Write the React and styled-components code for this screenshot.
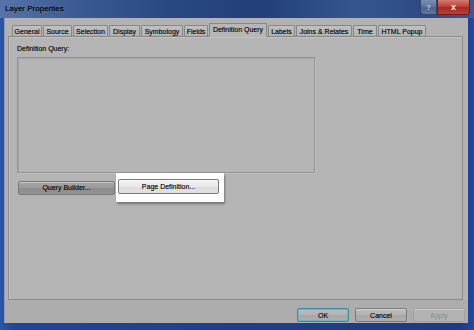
import React from "react";
import styled, { createGlobalStyle } from "styled-components";

const Global = createGlobalStyle`
  html, body { margin: 0; padding: 0; width: 474px; height: 330px; overflow: hidden; background: #1d3778; }
  * { box-sizing: border-box; }
`;

const Window = styled.div`
  width: 474px;
  height: 330px;
  display: flex;
  flex-direction: column;
  background: linear-gradient(to right, #2d55a6 0%, #20469a 3%, #1f3f8c 50%, #1c3a85 97%, #234a9e 100%);
  font-family: "Liberation Sans", Arial, sans-serif;
`;

const TitleBar = styled.div`
  height: 18px;
  flex: none;
  display: flex;
  align-items: flex-start;
  justify-content: space-between;
  padding-left: 5px;
  padding-right: 4px;
  background: linear-gradient(to right, #5674a8 0%, #3d5c96 15%, #2a4884 35%, #223f7c 55%, #36558f 75%, #2d4a86 90%, #3a5894 100%);
`;

const Title = styled.span`
  font-size: 8px;
  line-height: 18px;
  color: #05080f;
  text-shadow: 0 0 0.6px rgba(0, 0, 0, 0.7), 0 0 3px rgba(150, 170, 205, 0.5);
`;

const Caption = styled.div`
  display: flex;
  height: 15px;
`;

const CapButton = styled.div`
  width: ${(p) => p.$w}px;
  height: 15px;
  display: flex;
  align-items: center;
  justify-content: center;
  font-size: ${(p) => (p.$close ? 9 : 8)}px;
  font-weight: bold;
  color: ${(p) => (p.$close ? "#f3e4e4" : "#b9c4d6")};
  border: 1px solid ${(p) => (p.$close ? "#6e1c1c" : "#34466c")};
  border-top: none;
  border-radius: ${(p) => (p.$close ? "0 0 4px 0" : "0 0 0 4px")};
  background: ${(p) =>
    p.$close
      ? "linear-gradient(#d47a72 0%, #c0433a 45%, #a82a24 55%, #b8403a 100%)"
      : "linear-gradient(#7a8fb2 0%, #5f779f 45%, #4a628c 55%, #5f78a2 100%)"};
`;

const Client = styled.div`
  flex: 1;
  margin: 0 6px 7px 4px;
  background: #b2b2b2;
  border-left: 1px solid #8d9cb6;
  display: flex;
  flex-direction: column;
  padding: 5px 3px 0 3px;
`;

const TabStrip = styled.div`
  display: flex;
  align-items: flex-end;
  gap: 1px;
  height: 14px;
  padding-left: 4px;
  margin-right: 2px;
  position: relative;
  z-index: 1;
  margin-bottom: -1px;
`;

const text = `
  color: #141414;
  text-shadow: 0 0 0.5px rgba(0, 0, 0, 0.6);
`;

const Tab = styled.div`
  width: ${(p) => p.$w}px;
  height: ${(p) => (p.$active ? 14 : 12)}px;
  display: flex;
  align-items: center;
  justify-content: center;
  font-size: 7px;
  white-space: nowrap;
  ${text}
  border: 1px solid #878787;
  border-bottom: ${(p) => (p.$active ? "none" : "1px solid #878787")};
  border-radius: 1px 1px 0 0;
  background: ${(p) =>
    p.$active ? "#b6b6b6" : "linear-gradient(#c0c0c0, #b1b1b1)"};
  padding-bottom: ${(p) => (p.$active ? 2 : 0)}px;
`;

const Panel = styled.div`
  flex: 1;
  margin-right: 2px;
  border: 1px solid #8c8c8c;
  box-shadow: inset 1px 1px 0 #c2c2c2;
  background: #b4b4b4;
  padding: 7px 8px 0 8px;
  display: flex;
  flex-direction: column;
  align-items: flex-start;
`;

const Label = styled.div`
  font-size: 7px;
  line-height: 10px;
  ${text}
`;

const QueryBox = styled.div`
  margin-top: 3px;
  width: 298px;
  height: 116px;
  border: 1px solid #939393;
  box-shadow: inset 1px 1px 0 #a6a6a6, 1px 1px 0 #c0c0c0;
  background: #b5b5b5;
`;

const ButtonRow = styled.div`
  display: flex;
  align-items: center;
  margin-left: 1px;
`;

const Button = styled.div`
  width: ${(p) => p.$w}px;
  height: ${(p) => p.$h || 14}px;
  display: flex;
  align-items: center;
  justify-content: center;
  font-size: 7px;
  ${text}
  color: ${(p) => (p.$disabled ? "#8a8a8a" : "#141414")};
  text-shadow: ${(p) => (p.$disabled ? "none" : "0 0 0.5px rgba(0,0,0,0.6)")};
  border: 1px solid ${(p) => (p.$default ? "#3f8aa0" : p.$disabled ? "#a0a0a0" : "#7a7a7a")};
  border-radius: 2px;
  box-shadow: ${(p) => (p.$default ? "inset 0 0 0 1px #6fb0c4" : "inset 0 1px 0 rgba(255,255,255,0.35)")};
  background: ${(p) =>
    p.$variant === "dark"
      ? "linear-gradient(#a6a6a6 0%, #9a9a9a 50%, #8c8c8c 51%, #939393 100%)"
      : p.$variant === "light"
      ? "linear-gradient(#f4f4f4 0%, #e8e8e8 50%, #dcdcdc 51%, #e2e2e2 100%)"
      : p.$disabled
      ? "#b3b3b3"
      : "linear-gradient(#bdbdbd 0%, #b2b2b2 50%, #a6a6a6 51%, #aeaeae 100%)"};
`;

const Spotlight = styled.div`
  margin-left: 1px;
  padding: 6px 5px 8px 2px;
  background: #fdfdfd;
  box-shadow: 1px 2px 2px rgba(0, 0, 0, 0.35);
`;

const Footer = styled.div`
  height: 23px;
  flex: none;
  display: flex;
  justify-content: flex-end;
  align-items: flex-start;
  gap: 6px;
  padding-top: 8px;
  background: #adadad;
  margin: 0 -3px 0 -3px;
  padding-right: 3px;
`;

const tabs = [
  ["General", 30],
  ["Source", 29],
  ["Selection", 35],
  ["Display", 31],
  ["Symbology", 42],
  ["Fields", 24],
  ["Definition Query", 58],
  ["Labels", 27],
  ["Joins & Relates", 56],
  ["Time", 24],
  ["HTML Popup", 48],
];

export default function App() {
  return (
    <>
      <Global />
      <Window>
        <TitleBar>
          <Title>Layer Properties</Title>
          <Caption>
            <CapButton $w={17}>?</CapButton>
            <CapButton $w={33} $close>x</CapButton>
          </Caption>
        </TitleBar>
        <Client>
          <TabStrip>
            {tabs.map(([name, w]) => (
              <Tab key={name} $w={w} $active={name === "Definition Query"}>
                {name}
              </Tab>
            ))}
          </TabStrip>
          <Panel>
            <Label>Definition Query:</Label>
            <QueryBox />
            <ButtonRow>
              <Button $w={97} $variant="dark">Query Builder...</Button>
              <Spotlight>
                <Button $w={101} $h={15} $variant="light">Page Definition...</Button>
              </Spotlight>
            </ButtonRow>
          </Panel>
          <Footer>
            <Button $w={52} $default>OK</Button>
            <Button $w={52}>Cancel</Button>
            <Button $w={52} $disabled>Apply</Button>
          </Footer>
        </Client>
      </Window>
    </>
  );
}
